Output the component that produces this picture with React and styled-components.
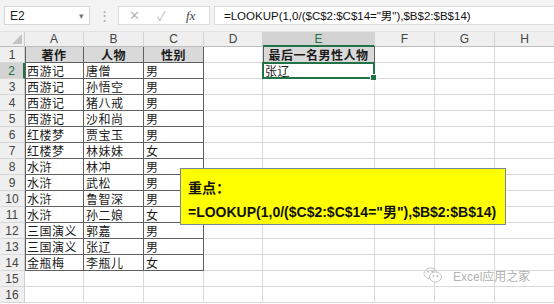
import styled, { createGlobalStyle } from "styled-components";

const GlobalST = createGlobalStyle`
body {
  margin: 0;
  overflow: hidden;
  background: #ffffff;
  font-family: "Liberation Sans", "Noto Sans CJK SC", sans-serif;
}
`

const widths = [59, 60, 60, 59, 112, 60, 60, 60]
const letters = ["A", "B", "C", "D", "E", "F", "G", "H"]

const books = ["著作", "西游记", "西游记", "西游记", "西游记", "红楼梦", "红楼梦", "水浒", "水浒", "水浒", "水浒", "三国演义", "三国演义", "金瓶梅"]
const people = ["人物", "唐僧", "孙悟空", "猪八戒", "沙和尚", "贾宝玉", "林妹妹", "林冲", "武松", "鲁智深", "孙二娘", "郭嘉", "张辽", "李瓶儿"]
const sex = ["性别", "男", "男", "男", "男", "男", "女", "男", "男", "男", "女", "男", "男", "女"]

const FORMULA = `=LOOKUP(1,0/($C$2:$C$14="男"),$B$2:$B$14)`

const cellFor = (row, col) => {
  if (row <= 14 && col <= 2) {
    const list = [books, people, sex][col]
    return { text: list[row - 1], boxed: true, head: row === 1, edge: col === 0 }
  }
  if (col === 4 && row === 1) return { text: "最后一名男性人物", boxed: true, head: true, edge: true }
  if (col === 4 && row === 2) return { text: "张辽", boxed: true, sel: true, edge: true }
  return { text: "" }
}

const App = () => {
  const rows = Array.from({ length: 16 }, (_, i) => i + 1)

  return (
    <PageST>
      <GlobalST />
      <ToolbarST>
        <NameBoxST>
          <span>E2</span>
          <span className="arrow">▾</span>
        </NameBoxST>
        <DotsST>⋮</DotsST>
        <FxGroupST>
          <span className="cancel">✕</span>
          <span className="ok">✓</span>
          <span className="fx">fx</span>
        </FxGroupST>
        <FormulaInputST>{FORMULA}</FormulaInputST>
      </ToolbarST>

      <SheetST>
        <GridST $widths={widths}>
          <CornerST />
          {letters.map((l, i) => (
            <ColHeadST key={l} $active={i === 4}>{l}</ColHeadST>
          ))}
          {rows.map(r => [
            <RowHeadST key={`h${r}`} $active={r === 2}>{r}</RowHeadST>,
            ...letters.map((l, c) => {
              const cell = cellFor(r, c)
              return (
                <CellST
                  key={`${l}${r}`}
                  $boxed={cell.boxed}
                  $head={cell.head}
                  $edge={cell.edge}
                  $sel={cell.sel}
                >
                  {cell.text}
                </CellST>
              )
            })
          ])}
        </GridST>

        <NoteST>
          <div>重点：</div>
          <div>{FORMULA}</div>
        </NoteST>

        <WatermarkST>
          <svg width="20" height="17" viewBox="0 0 20 17" fill="none" stroke="#c4c4c4" strokeWidth="1">
            <ellipse cx="7.5" cy="6.5" rx="6.5" ry="5.5" />
            <ellipse cx="12.5" cy="10" rx="6" ry="5" fill="#ffffff" />
            <circle cx="5" cy="4.5" r="0.8" fill="#c4c4c4" />
            <circle cx="9.5" cy="4.5" r="0.8" fill="#c4c4c4" />
            <circle cx="10.5" cy="9" r="0.7" fill="#c4c4c4" />
            <circle cx="14.5" cy="9" r="0.7" fill="#c4c4c4" />
          </svg>
          <span>Excel应用之家</span>
        </WatermarkST>
      </SheetST>
    </PageST>
  )
}

export default App;

const PageST = styled.div`
width: 554px;
height: 304px;
overflow: hidden;
background: #ffffff;
`

const ToolbarST = styled.div`
display: flex;
align-items: center;
height: 32px;
padding: 0 0 0 4px;
box-sizing: border-box;
background: #f3f3f3;
border-bottom: 1px solid #e2e2e2;
`

const NameBoxST = styled.div`
display: flex;
justify-content: space-between;
align-items: center;
width: 86px;
height: 19px;
padding: 0 5px;
box-sizing: border-box;
background: #ffffff;
border: 1px solid #d6d6d6;
font-size: 12px;
color: #222;

.arrow {
  font-size: 9px;
  color: #777;
}
`

const DotsST = styled.div`
width: 28px;
text-align: center;
font-size: 13px;
color: #a9a9a9;
`

const FxGroupST = styled.div`
display: flex;
align-items: center;
height: 19px;
width: 92px;
box-sizing: border-box;
background: #ffffff;
border: 1px solid #dcdcdc;
font-size: 13px;

.cancel {
  margin-left: 10px;
  color: #b8b8b8;
}

.ok {
  margin-left: 17px;
  color: #bdbdbd;
}

.fx {
  margin-left: 20px;
  font-family: "Liberation Serif", serif;
  font-style: italic;
  color: #444;
}
`

const FormulaInputST = styled.div`
flex: 1;
height: 19px;
margin-left: 4px;
padding-left: 9px;
box-sizing: border-box;
background: #ffffff;
border: 1px solid #dcdcdc;
border-right: none;
font-size: 11.5px;
line-height: 18px;
color: #111;
white-space: nowrap;
`

const SheetST = styled.div`
position: relative;
`

const GridST = styled.div`
display: grid;
grid-template-columns: 25px ${p => p.$widths.map(w => `${w}px`).join(" ")};
grid-template-rows: 15px;
grid-auto-rows: 16px;
font-size: 12px;
`

const CornerST = styled.div`
position: relative;
background: #efefef;
border-right: 1px solid #cfcfcf;
border-bottom: 1px solid #bdbdbd;

&::after {
  content: "";
  position: absolute;
  right: 2px;
  bottom: 2px;
  border-style: solid;
  border-width: 0 0 10px 10px;
  border-color: transparent transparent #c4c4c4 transparent;
}
`

const ColHeadST = styled.div`
display: flex;
justify-content: center;
align-items: center;
box-sizing: border-box;
background: ${p => (p.$active ? "#d3d3d3" : "#efefef")};
border-right: 1px solid #d4d4d4;
border-bottom: ${p => (p.$active ? "2px solid #217346" : "1px solid #bdbdbd")};
color: ${p => (p.$active ? "#217346" : "#444")};
font-size: 12px;
`

const RowHeadST = styled.div`
display: flex;
justify-content: center;
align-items: center;
box-sizing: border-box;
background: ${p => (p.$active ? "#d3d3d3" : "#efefef")};
border-right: ${p => (p.$active ? "2px solid #217346" : "1px solid #cfcfcf")};
border-bottom: 1px solid #d8d8d8;
color: ${p => (p.$active ? "#217346" : "#444")};
font-size: 12px;
`

const CellST = styled.div`
position: relative;
display: flex;
align-items: center;
justify-content: ${p => (p.$head ? "center" : "flex-start")};
padding-left: ${p => (p.$head ? 0 : 2)}px;
box-sizing: border-box;
background: ${p => (p.$head ? "#d9d9d9" : "#ffffff")};
border-right: 1px solid ${p => (p.$boxed ? "#5f5f5f" : "#dadada")};
border-bottom: 1px solid ${p => (p.$boxed ? "#5f5f5f" : "#dadada")};
box-shadow: ${p => (p.$edge ? "inset 1px 0 0 #5f5f5f" : "none")};
font-weight: ${p => (p.$head ? 700 : 400)};
letter-spacing: 0.5px;
color: #1a1a1a;
white-space: nowrap;
overflow: visible;

${p => p.$sel && `
  z-index: 2;
  &::after {
    content: "";
    position: absolute;
    top: -1px;
    left: -1px;
    right: -1px;
    bottom: -1px;
    border: 2px solid #217346;
  }
  &::before {
    content: "";
    position: absolute;
    right: -3px;
    bottom: -3px;
    width: 5px;
    height: 5px;
    background: #217346;
    border: 1px solid #ffffff;
    z-index: 3;
  }
`}
`

const NoteST = styled.div`
position: absolute;
left: 180px;
top: 136px;
width: 326px;
height: 57px;
padding: 7px 0 0 7px;
box-sizing: border-box;
background: #ffff00;
border: 1px solid #7486a0;
font-size: 14px;
font-weight: 700;
line-height: 24px;
color: #111;
white-space: nowrap;
z-index: 5;
`

const WatermarkST = styled.div`
position: absolute;
left: 423px;
top: 235px;
display: flex;
align-items: center;
gap: 10px;
font-size: 12px;
color: #b2b2b2;
z-index: 5;
`
